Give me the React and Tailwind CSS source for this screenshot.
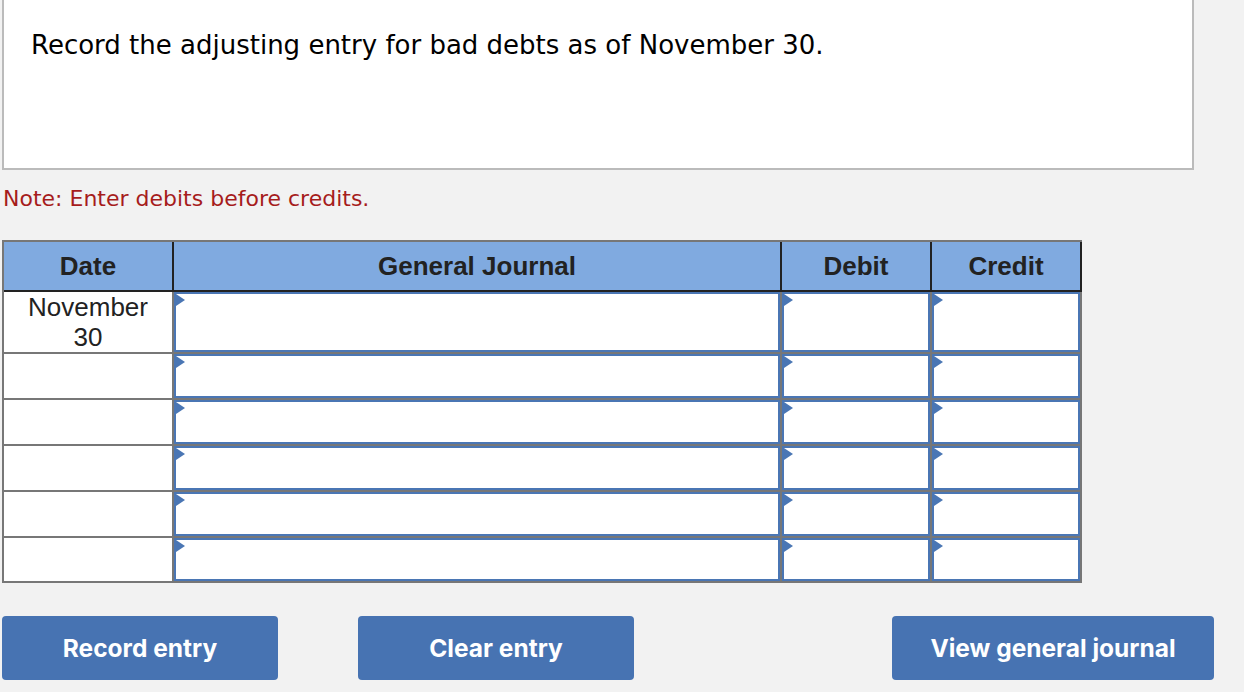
import React from "react";

function Arrow() {
  return (
    <svg className="absolute left-0 top-0" width="9" height="12" viewBox="0 0 9 12">
      <polygon points="0,0 9,6 0,12" fill="#4a76b4" />
    </svg>
  );
}

function Input() {
  return (
    <div className="relative h-full w-full bg-white border-2 border-[#4a76b4]">
      <Arrow />
    </div>
  );
}

const cols = "grid grid-cols-[168px_606px_148px_148px] gap-x-[2px] pr-[2px]";

export default function App() {
  const rows = [
    { h: "h-[60px]", date: true },
    { h: "h-[44px]" },
    { h: "h-[44px]" },
    { h: "h-[44px]" },
    { h: "h-[44px]" },
    { h: "h-[43px]" },
  ];

  return (
    <div className="min-h-screen w-[1244px] bg-[#f2f2f2] px-[2px]">
      {/* question box */}
      <div className="w-[1192px] h-[170px] bg-white border-2 border-t-0 border-[#bbbbbb] pl-[27px] pt-[28px]">
        <p className="font-['DejaVu_Sans',sans-serif] text-[26px] leading-[34px] text-black">
          Record the adjusting entry for bad debts as of November 30.
        </p>
      </div>

      <p className="mt-[15px] pl-[1px] font-['DejaVu_Sans',sans-serif] text-[22px] leading-[28px] text-[#a61c1c]">
        Note: Enter debits before credits.
      </p>

      {/* journal table */}
      <div className="mt-[27px] w-[1080px] bg-[#777777] pl-[2px] pt-[2px] pb-[2px] font-['Liberation_Sans',Arial,sans-serif]">
        <div className={`${cols} bg-[#222222] pb-[2px]`}>
          {["Date", "General Journal", "Debit", "Credit"].map((t) => (
            <div key={t} className="h-[48px] bg-[#80aae0] flex items-center justify-center text-[26px] font-bold text-[#222222]">
              {t}
            </div>
          ))}
        </div>
        <div className="flex flex-col gap-y-[2px]">
          {rows.map((r, i) => (
            <div key={i} className={cols}>
              <div className={`${r.h} bg-white flex items-center justify-center text-center text-[26px] leading-[30px] text-[#222222]`}>
                {r.date && (
                  <span>
                    November
                    <br />
                    30
                  </span>
                )}
              </div>
              <div className={r.h}><Input /></div>
              <div className={r.h}><Input /></div>
              <div className={r.h}><Input /></div>
            </div>
          ))}
        </div>
      </div>

      {/* buttons */}
      <div className="mt-[33px] flex w-[1212px] font-['Inter',sans-serif]">
        <button className="w-[276px] h-[64px] rounded-[4px] bg-[#4773b2] text-white text-[24.5px] font-bold">
          Record entry
        </button>
        <button className="ml-[80px] w-[276px] h-[64px] rounded-[4px] bg-[#4773b2] text-white text-[24.5px] font-bold">
          Clear entry
        </button>
        <button className="ml-auto w-[322px] h-[64px] rounded-[4px] bg-[#4773b2] text-white text-[24.5px] font-bold">
          View general journal
        </button>
      </div>
    </div>
  );
}
